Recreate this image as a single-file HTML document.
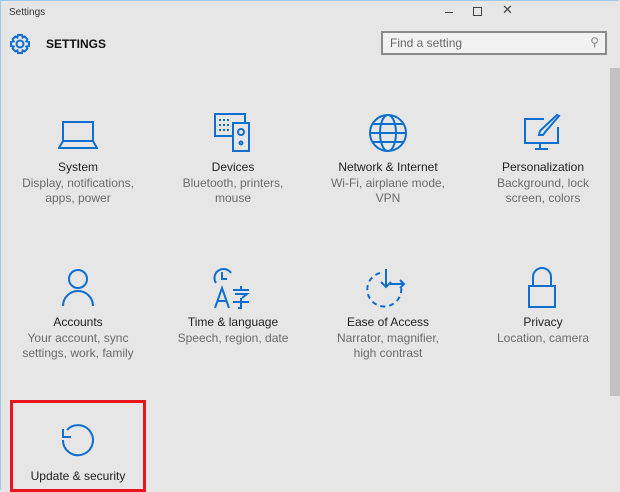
<!DOCTYPE html>
<html><head><style>
body{margin:0;width:620px;height:490px;overflow:hidden;background:#e6e6e6;font-family:"Liberation Sans",sans-serif;position:relative}
.win{position:absolute;left:0;top:0;width:619px;height:490px;border-left:1px solid #9cc6ec;border-top:1px solid #9cc6ec;box-sizing:border-box}
.t{position:absolute;text-align:center;width:116px;font-size:12px;line-height:15.5px;color:#6b6b6b}
.t b{display:block;font-weight:normal;color:#1e1e1e}
svg{position:absolute}
.ic{fill:none;stroke:#0f6fd0;stroke-width:2}
</style></head><body>
<div class="win"></div>
<div style="position:absolute;left:9px;top:7px;font-size:10px;color:#333">Settings</div>
<div style="position:absolute;left:445px;top:12px;width:8px;height:1px;background:#444"></div>
<div style="position:absolute;left:473px;top:7px;width:7px;height:7px;border:1px solid #444"></div>
<div style="position:absolute;left:502px;top:2px;font-size:13px;color:#444">✕</div>
<svg width="22" height="22" style="left:9px;top:33px" viewBox="0 0 22 22"><g class="ic" stroke-width="1.5"><circle cx="11" cy="11" r="3.5"/><path d="M9 2h4l.6 2.5 2-1 2.8 2.8-1 2 2.6.7v4l-2.6.6 1 2-2.8 2.8-2-1L13 20h-4l-.6-2.6-2 1-2.8-2.8 1-2L2 13V9l2.6-.7-1-2 2.8-2.8 2 1z"/></g></svg>
<div style="position:absolute;left:46px;top:37px;font-size:12px;font-weight:bold;color:#111">SETTINGS</div>
<div style="position:absolute;left:381px;top:31px;width:226px;height:24px;border:2px solid #8a8a8a;box-sizing:border-box;background:#f2f2f2;font-size:12px;color:#666;padding:3px 0 0 7px">Find a setting<span style="position:absolute;right:6px;top:2px;color:#888">⚲</span></div>
<div style="position:absolute;left:610px;top:68px;width:10px;height:328px;background:#c2c2c2"></div>

<svg width="40" height="40" style="left:58px;top:113px"><g class="ic"><rect x="5" y="9" width="30" height="19"/><path d="M1 35h38l-4-7H5z"/></g></svg>
<svg width="40" height="44" style="left:213px;top:110px"><g class="ic"><rect x="2" y="4" width="30" height="22"/><rect x="20" y="13" width="16" height="28" fill="#e6e6e6"/><circle cx="28" cy="22" r="3"/><circle cx="28" cy="33" r="1.5"/><path d="M6 10h10M6 15h10M6 20h10" stroke-dasharray="2 2"/></g></svg>
<svg width="40" height="40" style="left:368px;top:113px"><g class="ic"><circle cx="20" cy="20" r="18"/><ellipse cx="20" cy="20" rx="8" ry="18"/><path d="M2 20h36M5 11h30M5 29h30"/></g></svg>
<svg width="40" height="40" style="left:522px;top:113px"><g class="ic"><path d="M22 6H3v24h33V14"/><path d="M20 36h-2V30M13 36h13"/><path d="M37 3L24 18l-3 4-4 0 1-4 3-3L35 2z"/></g></svg>

<svg width="40" height="40" style="left:58px;top:268px"><g class="ic"><circle cx="20" cy="11" r="9"/><path d="M5 38a15 15 0 0 1 30 0"/></g></svg>
<svg width="44" height="44" style="left:211px;top:266px"><g class="ic"><path d="M5 17a9 9 0 1 1 15 -10"/><path d="M11 6v7h5"/><path d="M4 42l7-20 7 20M7 35h8"/><path d="M22 24h16M30 20v3M24 28h12l-5 4M30 32v10l-3 0M22 36h16"/></g></svg>
<svg width="44" height="44" style="left:366px;top:268px"><g class="ic"><path d="M14 5a17 17 0 1 0 20 10" stroke-dasharray="5 4"/><path d="M20 1v18M15 14l5 5 5-5M24 16h14M34 12l4 4-4 4"/></g></svg>
<svg width="40" height="44" style="left:522px;top:266px"><g class="ic"><path d="M11 20V11a9 9 0 0 1 18 0v9"/><rect x="7" y="20" width="26" height="21"/></g></svg>

<svg width="44" height="44" style="left:56px;top:421px"><g class="ic"><path d="M11 9a15 15 0 1 1-4 10"/><path d="M7 8v8h8" stroke-width="2"/></g></svg>

<div class="t" style="left:20px;top:160px"><b>System</b>Display, notifications, apps, power</div>
<div class="t" style="left:175px;top:160px"><b>Devices</b>Bluetooth, printers, mouse</div>
<div class="t" style="left:320px;top:160px;width:136px"><b>Network &amp; Internet</b>Wi-Fi, airplane mode, VPN</div>
<div class="t" style="left:485px;top:160px"><b>Personalization</b>Background, lock screen, colors</div>
<div class="t" style="left:20px;top:315px"><b>Accounts</b>Your account, sync settings, work, family</div>
<div class="t" style="left:165px;top:315px;width:136px"><b>Time &amp; language</b>Speech, region, date</div>
<div class="t" style="left:330px;top:315px"><b>Ease of Access</b>Narrator, magnifier, high contrast</div>
<div class="t" style="left:485px;top:315px"><b>Privacy</b>Location, camera</div>
<div class="t" style="left:10px;top:469px;width:136px"><b>Update &amp; security</b></div>
<div style="position:absolute;left:10px;top:400px;width:136px;height:92px;border:3px solid #e8141e;box-sizing:border-box"></div>
</body></html>
